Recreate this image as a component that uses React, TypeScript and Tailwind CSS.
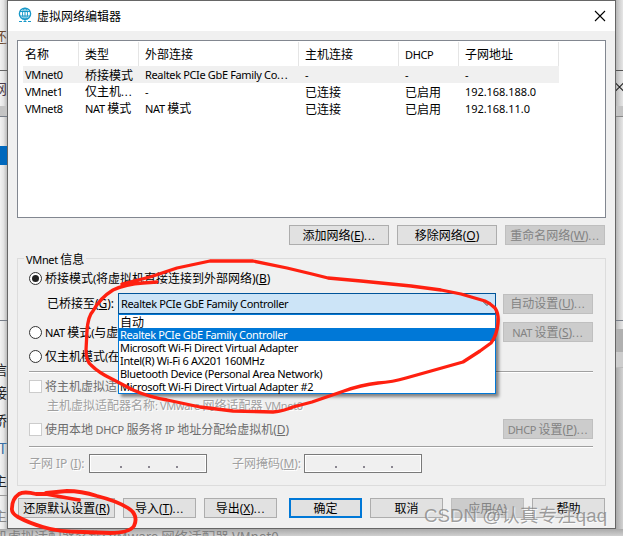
import { Fragment } from 'react'
import type { ReactNode } from 'react'
import clsx from 'clsx'

interface ButtonProps {
  text: string
  className?: string
  disabled?: boolean
  primary?: boolean
}

const NETWORKS = [
  ['VMnet0', '桥接模式', 'Realtek PCIe GbE Family Co...', '-', '-', '-'],
  ['VMnet1', '仅主机...', '-', '已连接', '已启用', '192.168.188.0'],
  ['VMnet8', 'NAT 模式', 'NAT 模式', '已连接', '已启用', '192.168.11.0'],
]

const HEADERS = ['名称', '类型', '外部连接', '主机连接', 'DHCP', '子网地址']

const COLUMNS = 'grid grid-cols-[56px_60px_160px_100px_60px_100px]'

const ADAPTERS = [
  '自动',
  'Realtek PCIe GbE Family Controller',
  'Microsoft Wi-Fi Direct Virtual Adapter',
  'Intel(R) Wi-Fi 6 AX201 160MHz',
  'Bluetooth Device (Personal Area Network)',
  'Microsoft Wi-Fi Direct Virtual Adapter #2',
]

// "&X" marks the mnemonic letter, as in Win32 resource strings
function Latin({ text }: { text: string }) {
  const dots = text.endsWith('...')
  const [before, after] = (dots ? text.slice(0, -3) : text).split('&')
  return (
    <span className="font-['Noto_Sans'] text-[11px]">
      <span className={after ? 'text-[12px] tracking-[-0.1px]' : /^[\d.]+$/.test(text) ? '-tracking-[0.05px]' : 'tracking-[-0.35px]'}>
        {before}
        {after && <span className="underline underline-offset-1">{after[0]}</span>}
        {after && after.slice(1)}
      </span>
      {dots && <span className="tracking-[0.9px]">...</span>}
    </span>
  )
}

function Label({ text }: { text: string }) {
  const parts = text.split(/([\x20-\x7e]+)/).filter(Boolean)
  return (
    <span className="whitespace-pre">
      {parts.map((part, i) =>
        /^[\x20-\x7e]/.test(part) ? <Latin key={i} text={part} /> : <Fragment key={i}>{part}</Fragment>,
      )}
    </span>
  )
}

function Button({ text, className, disabled, primary }: ButtonProps) {
  return (
    <button
      disabled={disabled}
      className={clsx(
        'h-5 shrink-0 flex items-center justify-center',
        primary ? 'border-2 border-[#0078d7] bg-[#e1e1e1]' : 'border',
        !primary && (disabled ? 'border-[#bfbfbf] bg-[#cccccc] text-[#838383]' : 'border-[#adadad] bg-[#e1e1e1]'),
        className,
      )}
    >
      <Label text={text} />
    </button>
  )
}

function Radio({ text, checked }: { text: string; checked?: boolean }) {
  return (
    <div className="flex h-5 items-center gap-[3px]">
      <span className="flex size-[13px] shrink-0 items-center justify-center rounded-full border border-[#333] bg-white">
        {checked && <span className="size-[7px] rounded-full bg-[#222]" />}
      </span>
      <Label text={text} />
    </div>
  )
}

function Checkbox({ text }: { text: string }) {
  return (
    <div className="flex h-5 items-center gap-[3px] text-[#6d6d6d]">
      <span className="size-[13px] shrink-0 border border-[#cccccc] bg-white" />
      <Label text={text} />
    </div>
  )
}

function Separator({ className }: { className: string }) {
  return <div className={clsx('h-0.5 w-[564px] border-b border-b-white bg-[#a0a0a0]', className)} />
}

function IpField() {
  return (
    <div className="flex h-[19px] w-[118px] items-end gap-[26px] border border-[#7a7a7a] pb-1 pl-[30px] outline outline-1 -outline-offset-2 outline-white">
      {[0, 1, 2].map(i => (
        <span key={i} className="h-0.5 w-0.5 bg-[#8a8690]" />
      ))}
    </div>
  )
}

function Strip({ h, className, children }: { h: string; className?: string; children?: ReactNode }) {
  return <div className={clsx('flex shrink-0 items-center justify-end overflow-hidden', h, className)}>{children}</div>
}

function LeftBackdrop() {
  return (
    <div className="flex w-[7px] flex-col overflow-hidden bg-gradient-to-r from-[#f2f2f2] via-[#e4e4e4] to-[#bcbcbc] text-[14px] leading-none">
      <Strip h="h-[26px]" />
      <Strip h="h-[20px]" className="text-[#6b4a30]">还</Strip>
      <Strip h="h-[24px]" />
      <Strip h="h-px" className="bg-[#666]" />
      <Strip h="h-[9px]" />
      <Strip h="h-[16px]" className="text-[#4a3a4a]">网</Strip>
      <Strip h="h-[10px]" />
      <Strip h="h-[10px]" className="bg-[#c4c4c4]" />
      <Strip h="h-px" className="bg-[#777d88]" />
      <Strip h="h-[29px]" />
      <Strip h="h-[19px]" className="bg-[#0068bd]" />
      <Strip h="h-[155px]" />
      <Strip h="h-px" className="bg-[#777d88]" />
      <Strip h="h-[38px]" />
      <Strip h="h-[19px]" className="text-[#222]">信</Strip>
      <Strip h="h-[6px]" />
      <Strip h="h-[16px]" className="text-[#222]">接</Strip>
      <Strip h="h-[12px]" />
      <Strip h="h-[16px]" className="text-[#222]">桥</Strip>
      <Strip h="h-[13px]" />
      <Strip h="h-[14px]" className="text-[#3a6ea5]">T</Strip>
      <Strip h="h-[17px]" />
      <Strip h="h-[16px]" className="text-[#222]">主</Strip>
      <Strip h="h-[7px]" />
      <Strip h="h-px" className="bg-[#999]" />
      <Strip h="h-[10px]" />
      <Strip h="h-[18px]" className="text-[#888]">主</Strip>
    </div>
  )
}

function RightBackdrop() {
  return (
    <div className="flex w-[7px] flex-col overflow-hidden bg-gradient-to-r from-[#b8b8b8] via-[#d2d2d2] to-[#e6e6e6]">
      <Strip h="h-[70px]" />
      <Strip h="h-px" className="bg-[#555]" />
      <Strip h="h-[9px]" />
      <Strip h="h-[14px]" className="justify-start">
        <svg className="h-3 w-[10px] shrink-0" viewBox="0 0 10 12" fill="none" stroke="#222" strokeWidth="1.2">
          <path d="M-1 1.5 L8 10.5 M8 1.5 L-1 10.5" />
        </svg>
      </Strip>
      <Strip h="h-[12px]" />
      <Strip h="h-[10px]" className="bg-[#c4c4c4]" />
      <Strip h="h-px" className="bg-[#888]" />
      <Strip h="h-[203px]" />
      <Strip h="h-px" className="bg-[#777d88]" />
      <Strip h="h-[8px]" />
      <Strip h="h-[23px]" className="bg-[#b0b0b0]" />
      <Strip h="h-[15px]" className="bg-[#cdcdcd]" />
      <Strip h="h-px" className="bg-[#bbb]" />
      <Strip h="h-[161px]" className="bg-gradient-to-r from-[#aaa] to-[#d2d2d2]" />
    </div>
  )
}

function TitleBar() {
  return (
    <div className="flex h-[30px] items-center bg-white pl-[9px]">
      <svg className="mb-0.5 size-4 shrink-0" viewBox="0 0 16 16" fill="none" stroke="#1798c8">
        <circle cx="8" cy="6.8" r="5.6" strokeWidth="1.4" />
        <ellipse cx="8" cy="6.8" rx="2.5" ry="5.6" />
        <path d="M3 4.5H13 M3 9H13 M8 1.5V14" />
        <path d="M2 14.5H5 M6.5 14.5H9.5 M11 14.5H14" />
      </svg>
      <span className="ml-1">虚拟网络编辑器</span>
      <svg className="mr-[9px] mb-px ml-auto size-3" viewBox="0 0 12 12" stroke="#000" strokeWidth="1.1">
        <path d="M1 1 L11 11 M11 1 L1 11" />
      </svg>
    </div>
  )
}

function NetworkList() {
  return (
    <div className="h-[178px] w-[589px] border border-[#828790] bg-white pt-px">
      <div className={clsx(COLUMNS, 'ml-[5px] h-6')}>
        {HEADERS.map(h => (
          <div key={h} className="flex items-center border-r border-[#e5e5e5] pl-1.5 first:pl-0.5">
            <Label text={h} />
          </div>
        ))}
      </div>
      {NETWORKS.map((row, i) => (
        <div key={row[0]} className={clsx(COLUMNS, 'ml-[5px] h-[17px] w-[536px]', i === 0 && 'bg-[#f0f0f0]')}>
          {row.map((cell, j) => (
            <div key={j} className="flex items-center pl-1.5 first:pl-0.5">
              <Label text={cell} />
            </div>
          ))}
        </div>
      ))}
    </div>
  )
}

function AdapterSelect() {
  return (
    <div className="relative h-[21px] w-[378px]">
      <div className="flex h-[21px] items-center justify-between border border-[#005499] bg-[#cce4f7] pr-1 pl-0.5">
        <Label text="Realtek PCIe GbE Family Controller" />
        <svg className="h-1.5 w-2" viewBox="0 0 8 6" fill="none" stroke="#444">
          <path d="M0.5 1 L4 4.5 L7.5 1" />
        </svg>
      </div>
      <ul className="absolute top-[21px] left-0 z-10 w-[378px] border border-[#0078d7] bg-white shadow-[3px_3px_3px_rgba(0,0,0,0.45)]">
        {ADAPTERS.map((name, i) => (
          <li
            key={name}
            className={clsx(
              'flex h-[13px] items-center pl-px leading-[13px]',
              i > 0 && 'pb-0.5',
              i === 1 && 'bg-[#0078d7] text-white',
            )}
          >
            <Label text={name} />
          </li>
        ))}
      </ul>
    </div>
  )
}

function InfoGroup() {
  return (
    <div className="mt-[13px] h-[228px] w-[589px] border border-[#dcdcdc] pl-[11px]">
      <div className="-mt-2 -ml-1 flex h-4">
        <span className="-ml-px flex items-center bg-[#f0f0f0] px-0.5">
          <Label text="VMnet 信息" />
        </span>
      </div>
      <div className="mt-px">
        <Radio checked text="桥接模式(将虚拟机直接连接到外部网络)(&B)" />
      </div>
      <div className="mt-[5px] flex h-[21px] items-center">
        <div className="w-[89px] pl-[18px]">
          <Label text="已桥接至(&G):" />
        </div>
        <AdapterSelect />
        <Button disabled text="自动设置(&U)..." className="ml-[7px] w-[90px]" />
      </div>
      <div className="mt-2 flex w-[564px] justify-between">
        <Radio text="NAT 模式(与虚拟机共享主机的 IP 地址)(&N)" />
        <Button disabled text="NAT 设置(&S)..." className="w-[90px]" />
      </div>
      <div className="mt-1">
        <Radio text="仅主机模式(在专用网络内连接虚拟机)(&H)" />
      </div>
      <Separator className="mt-[5px]" />
      <div className="mt-[3px]">
        <Checkbox text="将主机虚拟适配器连接到此网络(&V)" />
      </div>
      <div className="flex h-[19px] items-center pl-[18px] text-[#a0a0a0] [text-shadow:1px_1px_0_#fff]">
        <Label text="主机虚拟适配器名称: VMware 网络适配器 VMnet0" />
      </div>
      <div className="mt-1 flex w-[564px] justify-between">
        <Checkbox text="使用本地 DHCP 服务将 IP 地址分配给虚拟机(&D)" />
        <Button disabled text="DHCP 设置(&P)..." className="w-[90px]" />
      </div>
      <Separator className="mt-[7px]" />
      <div className="mt-1.5 flex h-[19px] items-center text-[#a0a0a0] [text-shadow:1px_1px_0_#fff]">
        <div className="w-[60px]">
          <Label text="子网 IP (&I):" />
        </div>
        <IpField />
        <div className="w-[97px] pl-[25px]">
          <Label text="子网掩码(&M):" />
        </div>
        <IpField />
      </div>
    </div>
  )
}

function Dialog() {
  return (
    <div className="w-[609px] border border-[#666] bg-[#f0f0f0]">
      <TitleBar />
      <div className="pt-[9px] pl-[9px]">
        <NetworkList />
        <div className="mt-[7px] flex w-[588px] justify-end gap-2">
          <Button text="添加网络(&E)..." className="w-[100px]" />
          <Button text="移除网络(&O)" className="w-[100px]" />
          <Button disabled text="重命名网络(&W)..." className="w-[100px]" />
        </div>
        <InfoGroup />
        <div className="mt-3 ml-px flex gap-2">
          <Button text="还原默认设置(&R)" className="w-[97px]" />
          <Button text="导入(&T)..." className="w-[73px]" />
          <Button text="导出(&X)..." className="w-[73px]" />
          <Button primary text="确定" className="ml-1 w-[73px]" />
          <Button text="取消" className="w-[73px]" />
          <Button disabled text="应用(&A)" className="w-[73px]" />
          <Button text="帮助" className="w-[73px]" />
        </div>
      </div>
    </div>
  )
}

// Hand-drawn red circles on top of the dialog
function Annotations() {
  return (
    <svg
      className="pointer-events-none absolute inset-0 z-20 h-[536px] w-[623px]"
      viewBox="0 0 623 536"
      fill="none"
      stroke="#ff2010"
      strokeWidth="3.3"
      strokeLinecap="round"
      strokeLinejoin="round"
    >
      <path d="M157 282 L143 283 Q126 284 113 290 Q100 298 93 311 Q88 316 87 331 L86 350 Q86 361 91 365 Q99 373 112 379 L133 390 Q149 397 167 400 L200 407 L233 411 L273 412 Q284 411 293 407 L312 402 L344 391 Q361 385 378 383 Q393 382 406 378 L431 371 L463 362 L480 351 L491 343 Q497 335 498 323 Q499 314 495 308 Q490 303 485 301 L461 294 L441 290 L411 286 L361 281 L328 278 L312 274 L287 268 L253 261 L210 261 L177 268 L150 277 L122 284" />
      <path
        strokeWidth="3.8"
        d="M79 500 L62 497 L46 494 L36 494 Q24 491 19 494 Q12 499 12 508 Q11 513 18 517 Q29 523 43 527 Q58 532 83 532 L110 533 Q129 533 134 526 Q139 515 128 508 Q117 501 97 496 Q81 491 67 491 L46 493"
      />
    </svg>
  )
}

export default function App() {
  return (
    <div className="relative h-[536px] w-[623px] overflow-hidden bg-[#d8d8d8] font-['Noto_Sans_CJK_SC',sans-serif] text-[12px] leading-4 text-black">
      <div className="flex h-[529px]">
        <LeftBackdrop />
        <Dialog />
        <RightBackdrop />
      </div>
      <div className="h-[7px] overflow-hidden bg-gradient-to-b from-[#aaa] to-[#d0d0d0] text-[13.5px] leading-[14px] whitespace-pre text-[#808080]">
        <span className="-ml-1.5">机虚拟适配器名称: VMware 网络适配器 VMnet0</span>
      </div>
      <Annotations />
      <div className="absolute top-[504px] left-[424px] z-30 font-['Liberation_Sans','Noto_Sans_CJK_SC',sans-serif] text-[18.7px] leading-6 whitespace-nowrap text-[#777]/70 [text-shadow:1px_1px_1px_rgba(255,255,255,0.8)]">
        CSDN @认真专注qaq
      </div>
    </div>
  )
}
